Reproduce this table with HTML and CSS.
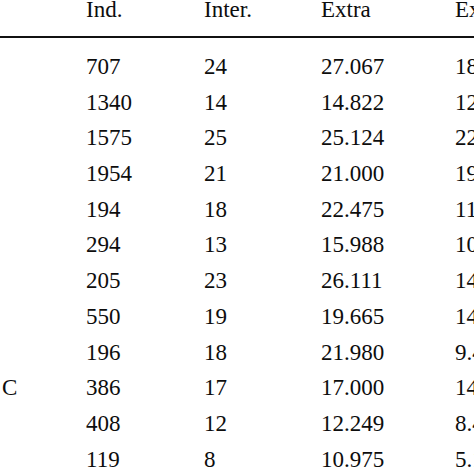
FILE: index.html
```html
<!DOCTYPE html>
<html>
<head>
<meta charset="utf-8">
<link rel="stylesheet" href="styles.css">
</head>
<body>
<div class="table">
  <div class="row head">
    <span></span><span>Ind.</span><span>Inter.</span><span>Extra</span><span>Extra</span>
  </div>
  <div class="body">
    <div class="row"><span></span><span>707</span><span>24</span><span>27.067</span><span>18.421</span></div>
    <div class="row"><span></span><span>1340</span><span>14</span><span>14.822</span><span>12.375</span></div>
    <div class="row"><span></span><span>1575</span><span>25</span><span>25.124</span><span>22.018</span></div>
    <div class="row"><span></span><span>1954</span><span>21</span><span>21.000</span><span>19.214</span></div>
    <div class="row"><span></span><span>194</span><span>18</span><span>22.475</span><span>11.650</span></div>
    <div class="row"><span></span><span>294</span><span>13</span><span>15.988</span><span>10.402</span></div>
    <div class="row"><span></span><span>205</span><span>23</span><span>26.111</span><span>14.875</span></div>
    <div class="row"><span></span><span>550</span><span>19</span><span>19.665</span><span>14.109</span></div>
    <div class="row"><span></span><span>196</span><span>18</span><span>21.980</span><span>9.444</span></div>
    <div class="row"><span>C</span><span>386</span><span>17</span><span>17.000</span><span>14.333</span></div>
    <div class="row"><span></span><span>408</span><span>12</span><span>12.249</span><span>8.417</span></div>
    <div class="row"><span></span><span>119</span><span>8</span><span>10.975</span><span>5.125</span></div>
  </div>
</div>
</body>
</html>
```

FILE: styles.css
```css
html, body {
  margin: 0;
  padding: 0;
  background: #ffffff;
}
body {
  width: 474px;
  height: 474px;
  overflow: hidden;
  font-family: "Liberation Serif", "Times New Roman", serif;
  font-size: 23px;
  color: #0d0d0d;
}
.table {
  width: 474px;
}
.row {
  display: grid;
  grid-template-columns: 84px 118px 117px 134px 200px;
  padding-left: 2px;
  white-space: nowrap;
  height: 35.7px;
  line-height: 35.7px;
}
.row.head {
  height: 20px;
  line-height: 20px;
  padding-bottom: 16px;
  border-bottom: 2px solid #111111;
}
.body {
  padding-top: 11px;
}
```
